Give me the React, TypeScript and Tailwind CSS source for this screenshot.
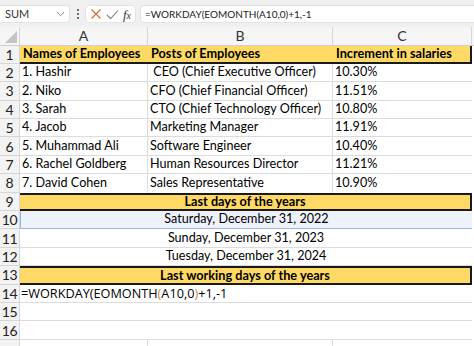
import React from "react";

const FONT = { fontFamily: "Lato, 'Open Sans', sans-serif" };

type Row = {
  n: number;
  kind: "header" | "data" | "title" | "date" | "formula" | "empty";
  cells?: string[];
  text?: string;
};

const rows: Row[] = [
  { n: 1, kind: "header", cells: ["Names of Employees", "Posts of Employees", "Increment in salaries"] },
  { n: 2, kind: "data", cells: ["1. Hashir", " CEO (Chief Executive Officer)", "10.30%"] },
  { n: 3, kind: "data", cells: ["2. Niko", "CFO (Chief Financial Officer)", "11.51%"] },
  { n: 4, kind: "data", cells: ["3. Sarah", "CTO (Chief Technology Officer)", "10.80%"] },
  { n: 5, kind: "data", cells: ["4. Jacob", "Marketing Manager", "11.91%"] },
  { n: 6, kind: "data", cells: ["5. Muhammad Ali", "Software Engineer", "10.40%"] },
  { n: 7, kind: "data", cells: ["6. Rachel Goldberg", "Human Resources Director", "11.21%"] },
  { n: 8, kind: "data", cells: ["7. David Cohen", "Sales Representative", "10.90%"] },
  { n: 9, kind: "title", text: "Last days of the years" },
  { n: 10, kind: "date", text: "Saturday, December 31, 2022" },
  { n: 11, kind: "date", text: "Sunday, December 31, 2023" },
  { n: 12, kind: "date", text: "Tuesday, December 31, 2024" },
  { n: 13, kind: "title", text: "Last working days of the years" },
  { n: 14, kind: "formula" },
  { n: 15, kind: "empty" },
  { n: 16, kind: "empty" },
  { n: 17, kind: "data", cells: ["", "", ""] },
];

const nextIsTitle = (i: number) => rows[i + 1]?.kind === "title";

function RowHead({ n }: { n: number }) {
  return (
    <div className="w-[20px] shrink-0 h-full bg-[#f3f3f3] border-r border-b border-[#d6d6d6] flex items-center justify-center text-[14px] text-[#222] tracking-[-0.3px]">
      {n <= 16 ? n : ""}
    </div>
  );
}

export default function App() {
  return (
    <div className="w-[474px] h-[346px] overflow-hidden bg-white text-black" style={FONT}>
      {/* toolbar */}
      <div className="h-[27px] bg-[#f0f0f0] flex items-center pt-[1px]">
        <div className="w-[70px] h-[18px] bg-white rounded-r-[4px] border border-l-0 border-[#e3e3e3] flex items-center justify-between pl-[5px] pr-[3px]">
          <span className="text-[11px] text-[#333]">SUM</span>
          <svg width="9" height="6" viewBox="0 0 9 6" className="mr-[1px]">
            <path d="M1 1.2 L4.5 4.6 L8 1.2" fill="none" stroke="#8a8a8a" strokeWidth="1" />
          </svg>
        </div>
        <div className="w-[15px] flex flex-col items-center justify-center gap-[2px]">
          <span className="w-[2px] h-[2px] bg-[#444] rounded-full" />
          <span className="w-[2px] h-[2px] bg-[#444] rounded-full" />
          <span className="w-[2px] h-[2px] bg-[#444] rounded-full" />
        </div>
        <div className="w-[51px] h-[18px] bg-white rounded-[4px] border border-[#e3e3e3] flex items-center justify-around px-[2px]">
          <svg width="12" height="12" viewBox="0 0 12 12">
            <path d="M1.5 1.5 L10.5 10.5 M10.5 1.5 L1.5 10.5" stroke="#d4692f" strokeWidth="1.1" fill="none" />
          </svg>
          <svg width="13" height="11" viewBox="0 0 13 11">
            <path d="M1 6 L4.6 9.6 L12 1.5" stroke="#7a8a7a" strokeWidth="1.1" fill="none" />
          </svg>
          <span className="text-[13px] italic text-[#333] leading-none" style={{ fontFamily: "'Liberation Serif', serif" }}>
            f<span className="text-[10px]">x</span>
          </span>
        </div>
        <div className="ml-[4px] flex-1 h-[18px] bg-white border border-r-0 border-[#e3e3e3] rounded-l-[4px] flex items-center pl-[4px]">
          <span className="text-[10px] text-[#222]">=WORKDAY(EOMONTH(A10,0)+1,-1</span>
        </div>
      </div>

      {/* column headers */}
      <div className="h-[18.5px] flex bg-[#f5f5f5] border-b border-[#d0d0d0]">
        <div className="w-[20px] shrink-0 border-r border-[#d6d6d6] relative overflow-hidden">
          <svg width="20" height="18" viewBox="0 0 20 18" className="absolute inset-0">
            <path d="M17 4 L17 16 L5 16 Z" fill="#c4c4c4" />
          </svg>
        </div>
        <div className="w-[128px] shrink-0 border-r border-[#d6d6d6] flex items-center justify-center text-[14px] text-[#333]">A</div>
        <div className="w-[185px] shrink-0 border-r border-[#d6d6d6] flex items-center justify-center text-[14px] text-[#333]">B</div>
        <div className="w-[139px] shrink-0 border-r border-[#d6d6d6] flex items-center justify-center text-[14px] text-[#333]">C</div>
        <div className="flex-1" />
      </div>

      {rows.map((r, i) => {
        const nb = nextIsTitle(i);
        if (r.kind === "header") {
          return (
            <div key={r.n} className="h-[18.4px] flex">
              <RowHead n={r.n} />
              <div className="flex bg-[#ffd966] border-b-2 border-r-2 border-[#1a1a1a] text-[12.7px] font-bold">
                <div className="w-[128px] px-[3px] flex items-center whitespace-nowrap">{r.cells![0]}</div>
                <div className="w-[185px] px-[3px] flex items-center whitespace-nowrap">{r.cells![1]}</div>
                <div className="w-[137px] px-[3px] flex items-center whitespace-nowrap">{r.cells![2]}</div>
              </div>
            </div>
          );
        }
        if (r.kind === "data") {
          const bb = nb ? "" : "border-b border-[#dcdcdc]";
          return (
            <div key={r.n} className="h-[18.4px] flex">
              <RowHead n={r.n} />
              <div className={`w-[128px] shrink-0 border-r border-[#dcdcdc] ${bb} px-[2px] flex items-center whitespace-pre text-[12.6px]`}>{r.cells![0]}</div>
              <div className={`w-[185px] shrink-0 border-r border-[#dcdcdc] ${bb} px-[2px] flex items-center whitespace-pre text-[12.6px]`}>{r.cells![1]}</div>
              <div className={`w-[139px] shrink-0 ${bb} px-[2px] flex items-center whitespace-pre text-[12.6px]`}>{r.cells![2]}</div>
            </div>
          );
        }
        if (r.kind === "title") {
          return (
            <div key={r.n} className="h-[18.4px] flex">
              <RowHead n={r.n} />
              <div className="w-[452px] shrink-0 bg-[#ffd966] border-y-2 border-r-2 border-[#1a1a1a] flex items-center justify-center text-[12.7px] font-bold">
                {r.text}
              </div>
            </div>
          );
        }
        if (r.kind === "date") {
          const sel = r.n === 10;
          const cls = sel
            ? "bg-[#eef3fb] border-b border-l border-[#9db5de]"
            : "border-b border-[#dcdcdc]";
          return (
            <div key={r.n} className="h-[18.4px] flex">
              <RowHead n={r.n} />
              <div className={`w-[452px] shrink-0 ${cls} flex items-center justify-center text-[12.6px]`}>{r.text}</div>
            </div>
          );
        }
        if (r.kind === "formula") {
          return (
            <div key={r.n} className="h-[18.4px] flex">
              <RowHead n={r.n} />
              <div className="w-[452px] shrink-0 border-b border-[#dcdcdc] flex items-center pl-[1px] text-[12.7px] whitespace-pre" style={{ fontFamily: "'Open Sans', sans-serif" }}>
                =WORKDAY(EOMONTH<span className="text-[#c9873a]">(</span>A10,0<span className="text-[#c9873a]">)</span>+1,-1
              </div>
            </div>
          );
        }
        return (
          <div key={r.n} className="h-[18.4px] flex">
            <RowHead n={r.n} />
            <div className="w-[452px] shrink-0 border-b border-[#dcdcdc]" />
          </div>
        );
      })}
    </div>
  );
}
